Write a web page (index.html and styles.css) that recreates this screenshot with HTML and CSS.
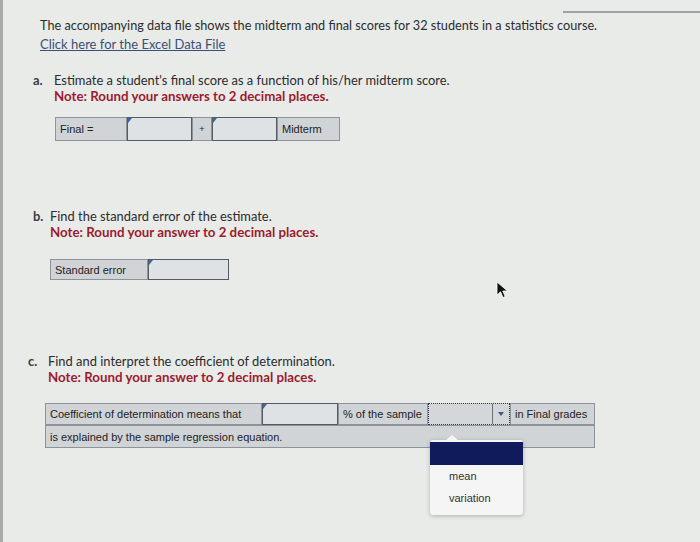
FILE: index.html
```html
<!DOCTYPE html>
<html>
<head>
<meta charset="utf-8">
<link rel="stylesheet" href="styles.css">
</head>
<body>
<div class="frame">
  <div class="topline"></div>
  <div class="content">
    <p class="intro">The accompanying data file shows the midterm and final scores for 32 students in a statistics course.</p>
    <p class="link"><a href="#">Click here for the Excel Data File</a></p>

    <div class="part part-a">
      <span class="letter">a.</span>
      <div class="ptext">
        <div>Estimate a student's final score as a function of his/her midterm score.</div>
        <div class="note">Note: Round your answers to 2 decimal places.</div>
      </div>
    </div>
    <div class="tbl tbl-a">
      <div class="cell lbl w-final">Final =</div>
      <div class="cell inp w-inp"></div>
      <div class="cell lbl w-plus">+</div>
      <div class="cell inp w-inp"></div>
      <div class="cell lbl w-mid">Midterm</div>
    </div>

    <div class="part part-b">
      <span class="letter">b.</span>
      <div class="ptext">
        <div>Find the standard error of the estimate.</div>
        <div class="note">Note: Round your answer to 2 decimal places.</div>
      </div>
    </div>
    <div class="tbl tbl-b">
      <div class="cell lbl w-se">Standard error</div>
      <div class="cell inp w-seinp"></div>
    </div>

    <div class="part part-c">
      <span class="letter">c.</span>
      <div class="ptext">
        <div>Find and interpret the coefficient of determination.</div>
        <div class="note">Note: Round your answer to 2 decimal places.</div>
      </div>
    </div>
    <div class="tblc">
      <div class="row">
        <div class="cell lbl w-coef">Coefficient of determination means that</div>
        <div class="cell inp w-cinp"></div>
        <div class="cell lbl w-pct">% of the sample</div>
        <div class="cell sel">
          <div class="selbox"></div>
          <div class="selbtn"><span class="tri"></span></div>
        </div>
        <div class="cell lbl w-fin">in Final grades</div>
      </div>
      <div class="row row2">
        <div class="cell lbl full">is explained by the sample regression equation.</div>
      </div>
      <div class="popup">
        <div class="notch"></div>
        <div class="opt selected"></div>
        <div class="opt">mean</div>
        <div class="opt">variation</div>
      </div>
    </div>
  </div>
  <svg class="cursor" width="14" height="18" viewBox="0 0 14 18"><path d="M1 1 L1 14 L4.5 10.8 L7 16.5 L9.2 15.5 L6.8 10 L11.5 10 Z" fill="#111" stroke="#fff" stroke-width="0.8"/></svg>
</div>
</body>
</html>
```
FILE: styles.css
```css
html, body {
  margin: 0;
  padding: 0;
}
body {
  width: 700px;
  height: 542px;
  overflow: hidden;
  background: #e6e8e5;
  font-family: Lato, "Open Sans", sans-serif;
  color: #2b2c2e;
}
.frame {
  position: relative;
  width: 697px;
  height: 542px;
  border-left: 3px solid #a9abaa;
  background: #e9ebe8;
}
.topline {
  position: absolute;
  left: 560px;
  top: 11px;
  width: 140px;
  height: 2px;
  background: #9ea3aa;
}
.content {
  padding: 16px 0 0 37px;
}
.intro {
  margin: 0;
  font-size: 12.7px;
  line-height: 18px;
}
.link {
  margin: 1px 0 0 0;
  font-size: 13px;
  line-height: 18px;
}
.link a {
  color: #3b4f77;
  text-decoration: underline;
}
.part {
  display: flex;
  font-size: 12.9px;
  line-height: 16px;
}
.letter {
  width: 21px;
  font-weight: 700;
  color: #3a3c40;
  text-align: left;
}
.note {
  font-weight: 700;
  font-size: 13.3px;
  color: #9b1c30;
}
.part-a {
  margin: 19px 0 0 -7px;
}
.tbl {
  display: flex;
  font-family: "Liberation Sans", Arial, sans-serif;
  font-size: 11px;
  color: #222;
}
.tbl-a {
  margin: 13px 0 0 15px;
  height: 24px;
}
.cell {
  box-sizing: border-box;
  height: 100%;
  display: flex;
  align-items: center;
}
.lbl {
  background: #d1d4d7;
  border: 1px solid #8e9399;
  padding: 0 4px;
}
.inp {
  position: relative;
  background: #dfe2e4;
  border: 1px solid #545b64;
}
.inp::before {
  content: "";
  position: absolute;
  left: 0;
  top: 0;
  border-top: 5px solid #3b63ae;
  border-right: 4px solid transparent;
}
.w-final { width: 72px; }
.w-inp { width: 65px; }
.w-plus { width: 20px; justify-content: center; padding: 0; font-size: 9px; }
.w-mid { width: 63px; }
.part-b {
  margin: 67px 0 0 -7px;
}
.part-b .letter { width: 17px; }
.tbl-b {
  margin: 19px 0 0 10px;
  height: 21px;
}
.w-se { width: 98px; }
.w-seinp { width: 81px; }
.part-c {
  margin: 73px 0 0 -12px;
}
.part-c .letter { width: 20px; }
.tblc {
  position: relative;
  margin: 18px 0 0 5px;
  width: 550px;
  font-family: "Liberation Sans", Arial, sans-serif;
  font-size: 11px;
  color: #222;
}
.row {
  display: flex;
  height: 22px;
}
.row2 { height: 23px; }
.w-coef { width: 217px; }
.w-cinp { width: 76px; }
.w-pct { width: 90px; }
.sel {
  width: 82px;
  display: flex;
  border: 1px dotted #2c3a55;
  background: #d4d7da;
}
.selbox {
  flex: 1;
  height: 100%;
  border-right: 1px solid #6b7078;
}
.selbtn {
  width: 16px;
  height: 100%;
  display: flex;
  align-items: center;
  justify-content: center;
}
.tri {
  width: 0;
  height: 0;
  border-left: 3.5px solid transparent;
  border-right: 3.5px solid transparent;
  border-top: 4px solid #3d5a8a;
}
.w-fin { flex: 1; }
.full { flex: 1; }
.popup {
  position: absolute;
  left: 385px;
  top: 37px;
  width: 93px;
  height: 75px;
  background: #f4f5f4;
  border-radius: 3px;
  box-shadow: 0 1px 4px rgba(0,0,0,0.25);
  padding-top: 2px;
  box-sizing: border-box;
  font-family: "Liberation Sans", Arial, sans-serif;
  font-size: 11px;
  color: #333;
}
.notch {
  position: absolute;
  left: 16px;
  top: -5px;
  width: 0;
  height: 0;
  border-left: 6px solid transparent;
  border-right: 6px solid transparent;
  border-bottom: 5px solid #f4f5f4;
}
.opt {
  height: 22px;
  line-height: 22px;
  padding-left: 19px;
}
.opt.selected {
  height: 23px;
  background: #101b5c;
}
.cursor {
  position: absolute;
  left: 493px;
  top: 281px;
}
```
